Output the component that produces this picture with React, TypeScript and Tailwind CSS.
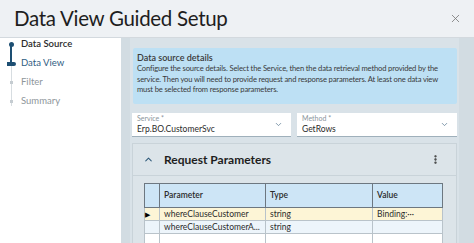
import { ChevronDown, ChevronUp, EllipsisVertical, X } from "lucide-react";

const font = { fontFamily: "Lato, 'Liberation Sans', sans-serif" };

const STEPS = [
  { label: "Data Source", state: "done" },
  { label: "Data View", state: "active" },
  { label: "Filter", state: "todo" },
  { label: "Summary", state: "todo" },
];

const ROWS = [
  { param: "whereClauseCustomer", type: "string", value: "Binding:···", current: true },
  { param: "whereClauseCustomerA...", type: "string", value: "", current: false },
  { param: "", type: "", value: "", current: false },
];

function Select({ label, value, width }: { label: string; value: string; width: string }) {
  return (
    <div className={`${width} h-[24px] bg-white border-b border-[#9fb0bb] flex items-center justify-between pl-[5px] pr-[8px]`}>
      <div className="flex flex-col leading-none">
        <span className="text-[7px] text-[#8a949b]">{label}</span>
        <span className="text-[8.5px] text-[#2b2b2b] mt-[3px]">{value}</span>
      </div>
      <ChevronDown size={9} strokeWidth={2} className="text-[#5d7c94]" />
    </div>
  );
}

export default function App() {
  return (
    <div className="w-[474px] h-[243px] overflow-hidden flex flex-col bg-white" style={font}>
      {/* Header */}
      <div className="h-[38px] shrink-0 bg-[#eef1f4] border-b border-[#d3d9de] flex items-center justify-between pl-[14px] pr-[12px]">
        <span className="text-[20.5px] text-[#1e1e1e] tracking-[-0.3px]">Data View Guided Setup</span>
        <X size={13} strokeWidth={1.5} className="text-[#777]" />
      </div>

      <div className="flex flex-1 min-h-0">
        {/* Steps */}
        <div className="w-[121px] shrink-0 bg-white relative">
          <div className="absolute left-[11px] top-[8px] w-px h-[60px] bg-[#d7dde1]" />
          <div className="absolute left-[10px] top-[5px] w-[2px] h-[21px] bg-[#1d4f73]" />
          <div className="-mt-[3px]">
            {STEPS.map((s) => (
              <div key={s.label} className="h-[19px] flex items-center relative">
                {s.state === "done" && <span className="absolute left-[9px] w-[5px] h-[5px] rounded-full bg-[#1d4f73]" />}
                {s.state === "active" && <span className="absolute left-[7px] w-[9px] h-[4px] rounded-r-full bg-[#1d4f73]" />}
                {s.state === "todo" && <span className="absolute left-[10px] w-[3px] h-[3px] bg-[#c5ccd1]" />}
                <span
                  className={`ml-[21px] text-[9.5px] ${
                    s.state === "done" ? "text-[#2b2b2b] font-semibold" : s.state === "active" ? "text-[#2f5e83]" : "text-[#8e969b]"
                  }`}
                >
                  {s.label}
                </span>
              </div>
            ))}
          </div>
        </div>

        {/* Main */}
        <div className="flex-1 bg-[#d2dce2] pl-[9px] pr-[15px]">
          <div className="h-full bg-[#d9e2e8] pl-[3px] pr-[2px] pt-[10px]">
            <div className="h-[56px] bg-[#bde0f4] rounded-[2px] pl-[4px] pr-[18px] pt-[4px] text-[#3a3a3a]">
              <div className="text-[9px] font-semibold leading-[11px]">Data source details</div>
              <div className="text-[7.6px] leading-[10.5px] tracking-[-0.15px]">
                Configure the source details. Select the Service, then the data retrieval method provided by the service. Then you will need to provide
                request and response parameters. At least one data view must be selected from response parameters.
              </div>
            </div>

            <div className="flex gap-[6px] mt-[9px] ml-[-1px]">
              <Select label="Service *" value="Erp.BO.CustomerSvc" width="w-[159px]" />
              <Select label="Method *" value="GetRows" width="w-[160px]" />
            </div>

            <div className="mt-[6px] ml-[-1px] bg-[#dce4e9] border border-[#c9d3d9] h-[120px]">
              <div className="h-[32px] border-b border-[#c9d3d9] flex items-center justify-between pl-[10px] pr-[15px]">
                <div className="flex items-center gap-[10px]">
                  <ChevronUp size={11} strokeWidth={2.2} className="text-[#2d5878]" />
                  <span className="text-[12px] font-bold text-[#1e1e1e]">Request Parameters</span>
                </div>
                <EllipsisVertical size={11} strokeWidth={3} className="text-[#333]" />
              </div>

              <div className="pt-[7px] pl-[11px] pr-[13px]">
                <table className="w-full border-collapse text-[8.5px] text-[#2b2b2b]">
                  <thead>
                    <tr className="h-[24px] bg-[#cde5f6]">
                      <th className="w-[15px] border border-[#6d7780]" />
                      <th className="w-[106px] border border-[#6d7780] text-left font-semibold pl-[4px]">Parameter</th>
                      <th className="w-[107px] border border-[#6d7780] text-left font-semibold pl-[4px]">Type</th>
                      <th className="border border-[#6d7780] text-left font-semibold pl-[4px]">Value</th>
                    </tr>
                  </thead>
                  <tbody>
                    {ROWS.map((r, i) => (
                      <tr key={i} className={`h-[13px] ${r.current ? "bg-[#fdf5d6]" : i === 1 ? "bg-[#edf5fb]" : "bg-white"}`}>
                        <td className="border border-[#b9c3ca] p-0 leading-none">
                          {r.current && <span className="text-[7px] text-black">▶</span>}
                        </td>
                        <td className="border border-[#b9c3ca] pl-[4px] leading-none">{r.param}</td>
                        <td className="border border-[#b9c3ca] pl-[4px] leading-none">{r.type}</td>
                        <td className="border border-[#b9c3ca] pl-[4px] leading-none">{r.value}</td>
                      </tr>
                    ))}
                  </tbody>
                </table>
              </div>
            </div>
          </div>
        </div>
      </div>
    </div>
  );
}
